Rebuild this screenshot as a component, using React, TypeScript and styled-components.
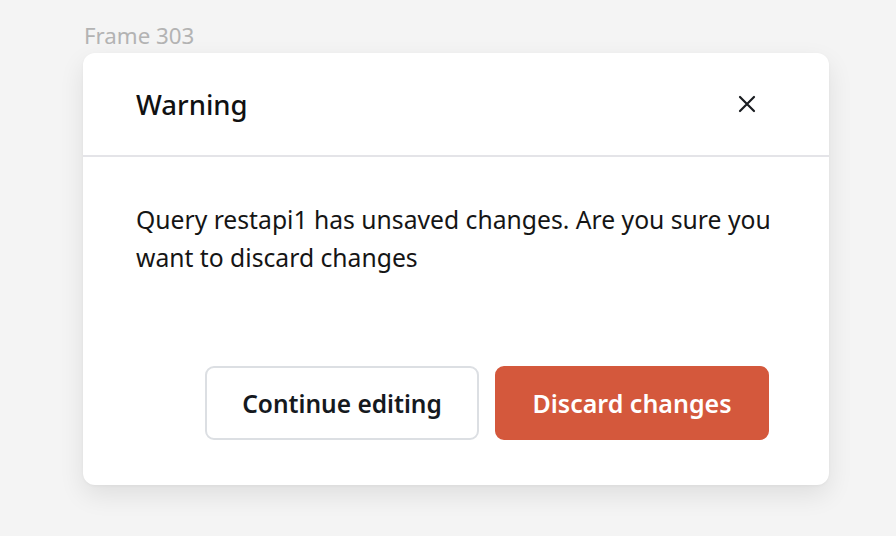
import React from 'react'
import styled, { createGlobalStyle } from 'styled-components'

const GlobalStyle = createGlobalStyle`
  html, body {
    margin: 0;
    padding: 0;
    background: #f4f4f4;
    font-family: "Noto Sans", "Open Sans", sans-serif;
  }
`

const Page = styled.div`
  width: 896px;
  height: 536px;
  box-sizing: border-box;
  padding: 21px 0 0 83px;
  overflow: hidden;
`

const FrameLabel = styled.div`
  font-size: 22.3px;
  line-height: 29px;
  color: #b3b3b3;
  padding-left: 1px;
  margin-bottom: 3px;
`

const Card = styled.div`
  width: 746px;
  background: #fff;
  border-radius: 12px;
  box-shadow: 0 10px 26px rgba(0, 0, 0, 0.09), 0 1px 3px rgba(0, 0, 0, 0.04);
`

const Header = styled.div`
  height: 102px;
  display: flex;
  align-items: center;
  justify-content: space-between;
  padding: 0 72px 0 53px;
  border-bottom: 2px solid #e4e4e8;
`

const Title = styled.h2`
  margin: 0;
  font-size: 27.5px;
  font-weight: 500;
  color: #111;
`

const CloseButton = styled.button`
  border: none;
  background: none;
  padding: 0;
  width: 20px;
  height: 20px;
  display: flex;
  align-items: center;
  justify-content: center;
  cursor: pointer;
`

const Body = styled.div`
  padding: 44px 40px 45px 53px;
`

const Message = styled.p`
  margin: 0;
  font-size: 24.7px;
  line-height: 38px;
  color: #151515;
`

const Actions = styled.div`
  display: flex;
  justify-content: flex-end;
  gap: 16px;
  margin-top: 89px;
  padding-right: 20px;
`

const ActionButton = styled.button<{ $danger?: boolean }>`
  width: 274px;
  height: 74px;
  box-sizing: border-box;
  border-radius: 9px;
  font-family: inherit;
  font-size: ${p => (p.$danger ? '25px' : '24.5px')};
  font-weight: 600;
  cursor: pointer;
  border: 2px solid ${p => (p.$danger ? '#d4583c' : '#dcdfe3')};
  background: ${p => (p.$danger ? '#d4583c' : '#fff')};
  color: ${p => (p.$danger ? '#fff' : '#15191e')};
`

export default function App() {
  return (
    <>
      <GlobalStyle />
      <Page>
        <FrameLabel>Frame 303</FrameLabel>
        <Card>
          <Header>
            <Title>Warning</Title>
            <CloseButton aria-label="Close">
              <svg width="18" height="18" viewBox="0 0 18 18" fill="none">
                <path d="M2 2L16 16M16 2L2 16" stroke="#1a1d21" strokeWidth="2.2" strokeLinecap="round" />
              </svg>
            </CloseButton>
          </Header>
          <Body>
            <Message>
              Query restapi1 has unsaved changes. Are you sure you want to discard changes
            </Message>
            <Actions>
              <ActionButton>Continue editing</ActionButton>
              <ActionButton $danger>Discard changes</ActionButton>
            </Actions>
          </Body>
        </Card>
      </Page>
    </>
  )
}
